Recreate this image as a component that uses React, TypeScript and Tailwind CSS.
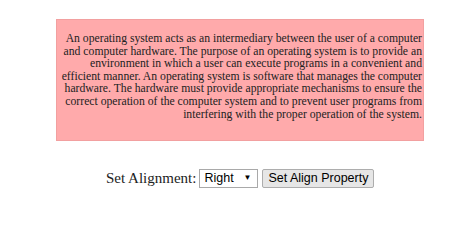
import React from "react";

export default function App() {
  return (
    <div className="w-[474px] h-[233px] bg-white overflow-hidden">
      <div className="ml-[56px] mt-[19px] w-[368px] h-[122px] bg-[#ffaaab] border border-[#f2a0a0] pt-[13px] pr-[1px] pl-[2px] text-right text-[11.7px] leading-[12.6px] text-[#222] font-['Liberation_Serif',serif]">
        An operating system acts as an intermediary between the user of a computer and computer hardware. The purpose of an operating system is to provide an environment in which a user can execute programs in a convenient and efficient manner. An operating system is software that manages the computer hardware. The hardware must provide appropriate mechanisms to ensure the correct operation of the computer system and to prevent user programs from interfering with the proper operation of the system.
      </div>
      <div className="mt-[27px] ml-[106px] flex items-center h-[20px]">
        <span className="font-['Liberation_Serif',serif] text-[15px] text-[#222] mr-[3px]">Set Alignment:</span>
        <div className="w-[59px] h-[19px] border border-[#a9a9a9] bg-white flex items-center justify-between pl-[4px] pr-[6px] font-['Liberation_Sans',sans-serif] text-[12.5px] text-black">
          <span>Right</span>
          <span className="text-[8px]">▼</span>
        </div>
        <div className="ml-[4px] w-[112px] h-[19px] border border-[#adadad] bg-[#e6e6e6] rounded-[2px] flex items-center justify-center font-['Liberation_Sans',sans-serif] text-[12.5px] text-black">
          Set Align Property
        </div>
      </div>
    </div>
  );
}
